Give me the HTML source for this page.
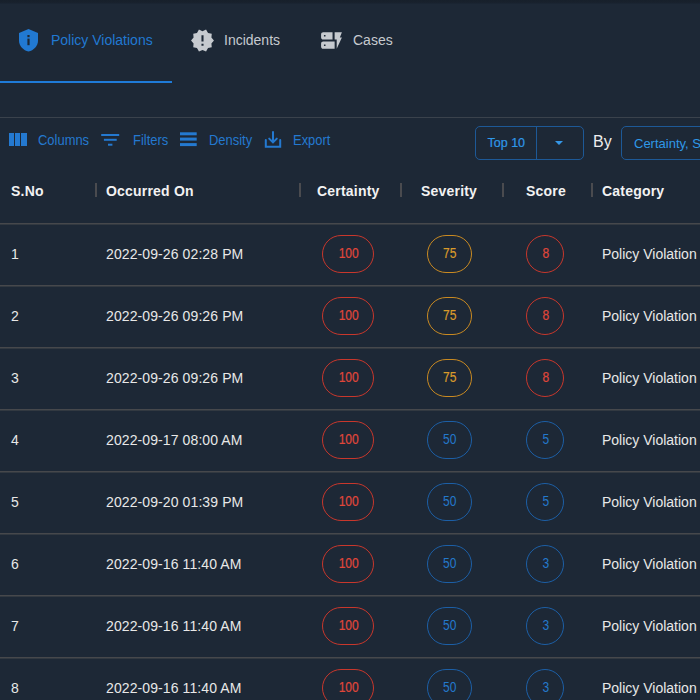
<!DOCTYPE html>
<html><head><meta charset="utf-8">
<style>
*{margin:0;padding:0;box-sizing:border-box}
html,body{width:700px;height:700px;overflow:hidden;background:#1d2836;font-family:"Liberation Sans",sans-serif;}
.a{position:absolute;white-space:nowrap;line-height:16px}
.tab{font-size:14px;color:#c6cacf}
.blue{color:#2179d2}
.tb{font-size:14px;color:#2479d0;transform:scaleX(.925);transform-origin:0 0}
.hd{font-size:14px;font-weight:700;color:#f2f2f2;letter-spacing:.2px}
.sep{position:absolute;top:183px;width:2px;height:13.5px;background:#4a4b4f}
.hl{position:absolute;left:0;width:700px;height:1px;background:#3a424c}
.hl2{position:absolute;left:0;width:700px;height:2px;background:linear-gradient(#46484c 50%,#323941 50%)}
.cell{font-size:14px;color:#e8e8e8}
.pill{position:absolute;height:38px;border-radius:19px;border:1.3px solid;text-align:center;font-size:14px;line-height:34px}
.pill span{display:inline-block;transform:scaleX(.86);-webkit-text-stroke:.2px currentColor;position:relative;left:.6px}
.pill.b span{-webkit-text-stroke:0}
.r{color:#e0473a;border-color:#c8372c}
.o{color:#d99a2b;border-color:#c98a22}
.b{color:#2479cc;border-color:#1c5fa6}
</style></head><body>
<div style="position:absolute;left:0;top:0;width:700px;height:4px;background:linear-gradient(#17202b,#18212d 60%,#1b2634)"></div>
<svg class="a" style="left:0;top:0" width="60" height="60" viewBox="0 0 60 60"><path fill="#2179d2" d="M19 33L28.5 29L38 33L38 41C38 46 33.5 50.5 28.5 51.5C23.5 50.5 19 46 19 41Z"/><rect x="27.4" y="35" width="2.2" height="2.2" fill="#1d2836"/><rect x="27.4" y="38.6" width="2.2" height="6.6" fill="#1d2836"/></svg>
<div class="a tab blue" style="left:51px;top:32px">Policy Violations</div>
<svg class="a" style="left:190px;top:28px" width="25" height="25" viewBox="0 0 24 24"><path fill="#c6cacf" d="M23 12l-2.44-2.78.34-3.68-3.61-.82-1.89-3.18L12 3 8.6 1.54 6.71 4.72l-3.61.81.34 3.68L1 12l2.44 2.78-.34 3.69 3.61.82 1.89 3.18L12 21l3.4 1.46 1.89-3.18 3.61-.82-.34-3.68L23 12zm-10 5h-2v-2h2v2zm0-4h-2V7h2v6z"/></svg>
<div class="a tab" style="left:224px;top:32px">Incidents</div>
<svg class="a" style="left:319px;top:28px" width="25" height="25" viewBox="0 0 24 24"><path fill="#c6cacf" d="M17 20v-9h-2V4h7l-2 5h2l-5 11zm-2-7v7H4c-1.1 0-2-.9-2-2v-3c0-1.1.9-2 2-2h11zm-8.75 2.75h-1.5v1.5h1.5v-1.5zM13 4v7H4c-1.1 0-2-.9-2-2V6c0-1.1.9-2 2-2h9zM6.25 6.75h-1.5v1.5h1.5v-1.5z"/></svg>
<div class="a tab" style="left:353px;top:32px">Cases</div>
<div style="position:absolute;left:0;top:81px;width:172px;height:2px;background:#1f7bd8"></div>
<div class="hl" style="top:117px"></div>
<svg class="a" style="left:0;top:120px" width="340" height="40" viewBox="0 120 340 40" fill="#2479d0"><rect x="9" y="133" width="5" height="13"/><rect x="15" y="133" width="5" height="13"/><rect x="21" y="133" width="6" height="13"/><rect x="101.2" y="134" width="18" height="2"/><rect x="103.9" y="138.8" width="12.8" height="2"/><rect x="108" y="143.7" width="4.4" height="2"/><rect x="180" y="132.3" width="16.7" height="3"/><rect x="180" y="137.6" width="16.7" height="3"/><rect x="180" y="143.1" width="16.7" height="3"/><path fill="none" stroke="#2479d0" stroke-width="2" stroke-linecap="round" d="M265.8 140v6.7h14.4v-6.7"/><path fill="none" stroke="#2479d0" stroke-width="2" stroke-linecap="round" d="M273 132v10M269.2 138.6l3.8 3.8 3.8-3.8"/></svg>
<div class="a tb" style="left:38px;top:132px">Columns</div>
<div class="a tb" style="left:133px;top:132px">Filters</div>
<div class="a tb" style="left:209px;top:132px">Density</div>
<div class="a tb" style="left:293px;top:132px">Export</div>
<div style="position:absolute;left:475px;top:126px;width:109px;height:33.5px;border:1.4px solid #1d5997;border-radius:5px"></div>
<div style="position:absolute;left:536px;top:126px;width:1px;height:33px;background:#1d5997"></div>
<div class="a" style="left:487.5px;top:134.5px;font-size:12.5px;color:#2f98e8;-webkit-text-stroke:.2px #2f98e8">Top 10</div>
<div class="a" style="left:555px;top:141px;width:0;height:0;border-left:4.5px solid transparent;border-right:4.5px solid transparent;border-top:4.5px solid #3597e8"></div>
<div class="a" style="left:593px;top:132.5px;font-size:16px;color:#eeeeee;line-height:18px">By</div>
<div style="position:absolute;left:621px;top:126px;width:120px;height:34px;border:1.4px solid #1d5997;border-radius:5px"></div>
<div class="a" style="left:634px;top:134.5px;font-size:13px;color:#2f98e8;transform:scaleY(1.05);transform-origin:0 0">Certainty, Severity</div>
<div class="a hd" style="left:11px;top:183px">S.No</div>
<div class="a hd" style="left:106px;top:183px">Occurred On</div>
<div class="a hd" style="left:317px;top:183px">Certainty</div>
<div class="a hd" style="left:421px;top:183px">Severity</div>
<div class="a hd" style="left:526px;top:183px">Score</div>
<div class="a hd" style="left:602px;top:183px">Category</div>
<div class="sep" style="left:95px"></div>
<div class="sep" style="left:298.5px"></div>
<div class="sep" style="left:400px"></div>
<div class="sep" style="left:501.5px"></div>
<div class="sep" style="left:591px"></div>
<div class="hl2" style="top:223px"></div>
<div class="a cell" style="left:11px;top:246px">1</div>
<div class="a cell" style="left:106px;top:246px;letter-spacing:.1px">2022-09-26 02:28 PM</div>
<div class="a cell" style="left:602px;top:246px">Policy Violation</div>
<div class="pill r" style="left:322px;top:235px;width:52px"><span>100</span></div>
<div class="pill o" style="left:427px;top:235px;width:45px"><span>75</span></div>
<div class="pill r" style="left:526px;top:235px;width:38px"><span>8</span></div>
<div class="hl2" style="top:285px"></div>
<div class="a cell" style="left:11px;top:308px">2</div>
<div class="a cell" style="left:106px;top:308px;letter-spacing:.1px">2022-09-26 09:26 PM</div>
<div class="a cell" style="left:602px;top:308px">Policy Violation</div>
<div class="pill r" style="left:322px;top:297px;width:52px"><span>100</span></div>
<div class="pill o" style="left:427px;top:297px;width:45px"><span>75</span></div>
<div class="pill r" style="left:526px;top:297px;width:38px"><span>8</span></div>
<div class="hl2" style="top:347px"></div>
<div class="a cell" style="left:11px;top:370px">3</div>
<div class="a cell" style="left:106px;top:370px;letter-spacing:.1px">2022-09-26 09:26 PM</div>
<div class="a cell" style="left:602px;top:370px">Policy Violation</div>
<div class="pill r" style="left:322px;top:359px;width:52px"><span>100</span></div>
<div class="pill o" style="left:427px;top:359px;width:45px"><span>75</span></div>
<div class="pill r" style="left:526px;top:359px;width:38px"><span>8</span></div>
<div class="hl2" style="top:409px"></div>
<div class="a cell" style="left:11px;top:432px">4</div>
<div class="a cell" style="left:106px;top:432px;letter-spacing:.1px">2022-09-17 08:00 AM</div>
<div class="a cell" style="left:602px;top:432px">Policy Violation</div>
<div class="pill r" style="left:322px;top:421px;width:52px"><span>100</span></div>
<div class="pill b" style="left:427px;top:421px;width:45px"><span>50</span></div>
<div class="pill b" style="left:526px;top:421px;width:38px"><span>5</span></div>
<div class="hl2" style="top:471px"></div>
<div class="a cell" style="left:11px;top:494px">5</div>
<div class="a cell" style="left:106px;top:494px;letter-spacing:.1px">2022-09-20 01:39 PM</div>
<div class="a cell" style="left:602px;top:494px">Policy Violation</div>
<div class="pill r" style="left:322px;top:483px;width:52px"><span>100</span></div>
<div class="pill b" style="left:427px;top:483px;width:45px"><span>50</span></div>
<div class="pill b" style="left:526px;top:483px;width:38px"><span>5</span></div>
<div class="hl2" style="top:533px"></div>
<div class="a cell" style="left:11px;top:556px">6</div>
<div class="a cell" style="left:106px;top:556px;letter-spacing:.1px">2022-09-16 11:40 AM</div>
<div class="a cell" style="left:602px;top:556px">Policy Violation</div>
<div class="pill r" style="left:322px;top:545px;width:52px"><span>100</span></div>
<div class="pill b" style="left:427px;top:545px;width:45px"><span>50</span></div>
<div class="pill b" style="left:526px;top:545px;width:38px"><span>3</span></div>
<div class="hl2" style="top:595px"></div>
<div class="a cell" style="left:11px;top:618px">7</div>
<div class="a cell" style="left:106px;top:618px;letter-spacing:.1px">2022-09-16 11:40 AM</div>
<div class="a cell" style="left:602px;top:618px">Policy Violation</div>
<div class="pill r" style="left:322px;top:607px;width:52px"><span>100</span></div>
<div class="pill b" style="left:427px;top:607px;width:45px"><span>50</span></div>
<div class="pill b" style="left:526px;top:607px;width:38px"><span>3</span></div>
<div class="hl2" style="top:657px"></div>
<div class="a cell" style="left:11px;top:680px">8</div>
<div class="a cell" style="left:106px;top:680px;letter-spacing:.1px">2022-09-16 11:40 AM</div>
<div class="a cell" style="left:602px;top:680px">Policy Violation</div>
<div class="pill r" style="left:322px;top:669px;width:52px"><span>100</span></div>
<div class="pill b" style="left:427px;top:669px;width:45px"><span>50</span></div>
<div class="pill b" style="left:526px;top:669px;width:38px"><span>3</span></div>
</body></html>
